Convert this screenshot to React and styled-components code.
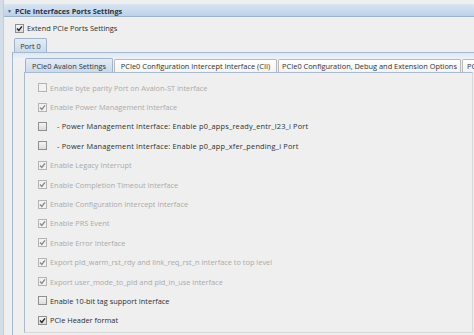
import React from "react";
import styled, { createGlobalStyle } from "styled-components";

const Global = createGlobalStyle`
  html, body { margin: 0; padding: 0; background: #efefef; overflow: hidden; }
  body { font-family: "Open Sans", "Noto Sans", sans-serif; }
  * { box-sizing: border-box; }
`;

const Page = styled.div`
  display: flex;
  width: 474px;
  height: 335px;
  overflow: hidden;
  background: #efefef;
`;

const SideStrip = styled.div`
  width: 4px;
  flex: none;
  background: #d3dde8;
  border-right: 1px solid #c2cedb;
`;

const Main = styled.div`
  flex: 1;
  display: flex;
  flex-direction: column;
  padding-top: 4px;
  min-width: 0;
`;

const SectionHeader = styled.div`
  height: 13px;
  display: flex;
  align-items: center;
  gap: 3px;
  padding-left: 3px;
  background: linear-gradient(#d5e3f2, #bcd1e9);
  border-top: 1px solid #d9e5f1;
  border-bottom: 1px solid #9cb3cf;
  font-size: 7.3px;
  font-weight: 700;
  color: #2d3440;
`;

const Tri = styled.span`
  font-size: 5px;
  color: #556;
`;

const CheckRow = styled.div`
  display: flex;
  align-items: center;
  height: ${(p) => p.h || 19.4}px;
  gap: 3px;
  font-size: 7.4px;
  color: ${(p) => (p.disabled ? "#aaaaaa" : "#2e2e2e")};
  white-space: nowrap;
`;

const Box = styled.span`
  width: 9px;
  height: 9px;
  flex: none;
  border: 1px solid ${(p) => (p.disabled ? "#b4b4b4" : "#8e8f8f")};
  background: ${(p) => (p.disabled ? "#f2f2f2" : "linear-gradient(#f4f4f4, #dcdcdc)")};
  display: flex;
  align-items: center;
  justify-content: center;
`;

const Label = styled.span`
  padding-left: ${(p) => p.pad || 0}px;
  letter-spacing: ${(p) => p.ls || 0}px;
`;

function Check({ checked, disabled }) {
  return (
    <Box disabled={disabled}>
      {checked && (
        <svg width="7" height="7" viewBox="0 0 7 7">
          <path d="M1 3.6 L2.8 5.4 L6 1.4" fill="none" stroke={disabled ? "#8a8a8a" : "#222"} strokeWidth="1.4" />
        </svg>
      )}
    </Box>
  );
}

const TopArea = styled.div`
  padding: 3px 0 0 11px;
`;

const TabStrip = styled.div`
  display: flex;
  align-items: flex-end;
  padding-left: ${(p) => p.pad || 0}px;
  height: ${(p) => p.h}px;
`;

const Tab = styled.div`
  flex: none;
  width: ${(p) => (p.w ? `${p.w}px` : "auto")};
  height: ${(p) => (p.active ? 14 : 13)}px;
  padding: 0 ${(p) => p.px || 0}px;
  display: flex;
  align-items: center;
  justify-content: ${(p) => (p.w ? "center" : "flex-start")};
  font-size: 7.4px;
  color: #333;
  white-space: nowrap;
  border: 1px solid ${(p) => (p.active ? "#9fb4cc" : "#b8b8b8")};
  border-bottom: none;
  border-radius: 2px 2px 0 0;
  background: ${(p) => (p.active ? "linear-gradient(#e3ecf6, #c9daec)" : "linear-gradient(#ffffff, #f3f3f3)")};
  margin-right: 1px;
`;

const PortPanel = styled.div`
  flex: 1;
  margin-left: 8px;
  border-left: 1px solid #a4b8d0;
  border-top: 1px solid #a4b8d0;
  background: linear-gradient(#dde7f2 0px, #eef1f5 6px, #efefef 20px);
  display: flex;
  flex-direction: column;
  padding-left: 11px;
  padding-right: 1px;
  padding-bottom: 2px;
`;

const InnerPanel = styled.div`
  flex: 1;
  background: #efefef;
  border: 1px solid #a8bad0;
  border-right-color: #d8d8d8;
  border-bottom-color: #d8d8d8;
  padding: 5px 0 0 13px;
`;

const rows = [
  { t: "Enable byte parity Port on Avalon-ST interface", c: false, d: true },
  { t: "Enable Power Management Interface", c: true, d: true },
  { t: "-  Power Management Interface: Enable p0_apps_ready_entr_l23_i Port", c: false, d: false, pad: 7, ls: 0.18 },
  { t: "-  Power Management Interface: Enable p0_app_xfer_pending_i Port", c: false, d: false, pad: 7, ls: 0.18 },
  { t: "Enable Legacy Interrupt", c: true, d: true },
  { t: "Enable Completion Timeout Interface", c: true, d: true },
  { t: "Enable Configuration Intercept Interface", c: true, d: true },
  { t: "Enable PRS Event", c: true, d: true },
  { t: "Enable Error Interface", c: true, d: true },
  { t: "Export pld_warm_rst_rdy and link_req_rst_n interface to top level", c: true, d: true },
  { t: "Export user_mode_to_pld and pld_in_use interface", c: true, d: true },
  { t: "Enable 10-bit tag support Interface", c: false, d: false },
  { t: "PCIe Header format", c: true, d: false },
];

export default function App() {
  return (
    <Page>
      <Global />
      <SideStrip />
      <Main>
        <SectionHeader>
          <Tri>▼</Tri>
          PCIe Interfaces Ports Settings
        </SectionHeader>
        <TopArea>
          <CheckRow h={16}>
            <Check checked />
            Extend PCIe Ports Settings
          </CheckRow>
        </TopArea>
        <TabStrip pad={10} h={16}>
          <Tab active w={33}>Port 0</Tab>
        </TabStrip>
        <PortPanel>
          <TabStrip pad={1} h={19}>
            <Tab active w={88}>PCIe0 Avalon Settings</Tab>
            <Tab w={163}>PCIe0 Configuration Intercept Interface (CII)</Tab>
            <Tab w={183}>PCIe0 Configuration, Debug and Extension Options</Tab>
            <Tab px={4}>PCIe0 Configuration</Tab>
          </TabStrip>
          <InnerPanel>
            {rows.map((r, i) => (
              <CheckRow key={i} disabled={r.d}>
                <Check checked={r.c} disabled={r.d} />
                <Label pad={r.pad} ls={r.ls}>{r.t}</Label>
              </CheckRow>
            ))}
          </InnerPanel>
        </PortPanel>
      </Main>
    </Page>
  );
}
